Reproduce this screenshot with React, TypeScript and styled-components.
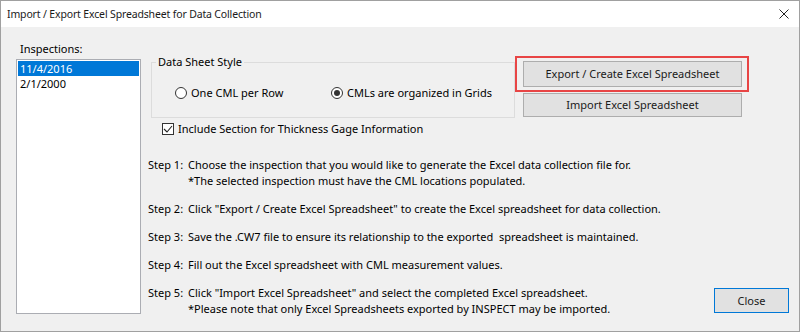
import React from 'react';
import {createGlobalStyle, styled} from 'styled-components';

const GlobalStyle = createGlobalStyle`
  html, body {
    margin: 0;
    padding: 0;
    background: #ffffff;
  }

  body {
    font-family: 'Noto Sans', 'Segoe UI', sans-serif;
    font-size: 11px;
    line-height: 16px;
    color: #000000;
  }
`;

const Window = styled.div`
  display: flex;
  flex-direction: column;
  width: 800px;
  height: 332px;
  box-sizing: border-box;
  border: 1px solid #a0a0a0;
  background: #f0f0f0;
`;

const TitleBar = styled.div`
  display: flex;
  align-items: center;
  justify-content: space-between;
  height: 26px;
  padding: 0 10px 0 6px;
  background: #ffffff;
  color: #1a1a1a;
`;

const Title = styled.span`
  font-size: 10.5px;
  letter-spacing: -0.15px;
`;

const Body = styled.div`
  display: flex;
  flex: 1;
  gap: 7px;
  padding: 14px 10px 0 15px;
`;

const LeftColumn = styled.div`
  display: flex;
  flex-direction: column;
  width: 125px;
`;

const Label = styled.div`
  padding-left: 4px;
  margin-bottom: 2px;
`;

const ListBox = styled.ul`
  margin: 0;
  padding: 1px;
  height: 255px;
  box-sizing: border-box;
  list-style: none;
  background: #ffffff;
  border: 1px solid #abadb3;
`;

const ListItem = styled.li<{$selected?: boolean}>`
  height: 15px;
  line-height: 15px;
  padding-left: 2px;
  color: ${(p) => (p.$selected ? '#ffffff' : '#000000')};
  background: ${(p) => (p.$selected ? '#0078d7' : 'transparent')};
`;

const RightColumn = styled.div`
  display: flex;
  flex: 1;
  flex-direction: column;
  padding-top: 15px;
`;

const TopRow = styled.div`
  display: flex;
  align-items: flex-start;
`;

const GroupBox = styled.fieldset`
  width: 364px;
  height: 62px;
  box-sizing: border-box;
  margin: 0 0 0 3px;
  padding: 17px 0 0 0;
  border: 1px solid #dcdcdc;
  border-radius: 0;
`;

const Legend = styled.legend`
  margin-left: 4px;
  padding: 0 2px;
  line-height: 12px;
`;

const RadioRow = styled.div`
  display: grid;
  grid-template-columns: 156px auto;
  padding-left: 23px;
`;

const Option = styled.label`
  display: flex;
  align-items: center;
  gap: 4px;
`;

const RadioCircle = styled.span<{$checked?: boolean}>`
  position: relative;
  width: 12px;
  height: 12px;
  box-sizing: border-box;
  border: 1px solid #333333;
  border-radius: 50%;
  background: #ffffff;

  &::after {
    content: '';
    display: ${(p) => (p.$checked ? 'block' : 'none')};
    position: absolute;
    inset: 2px;
    border-radius: 50%;
    background: #333333;
  }
`;

const ButtonColumn = styled.div`
  display: flex;
  flex-direction: column;
  gap: 1px;
`;

const Highlight = styled.div`
  padding: 3px 5px 3px 6px;
  border: 2px solid #e84545;
`;

const Button = styled.button<{$width: number; $height: number; $focused?: boolean}>`
  width: ${(p) => p.$width}px;
  height: ${(p) => p.$height}px;
  padding: 0;
  font: inherit;
  color: #1a1a1a;
  background: #e1e1e1;
  border: 1px solid ${(p) => (p.$focused ? '#0078d7' : '#adadad')};
  border-radius: 0;
`;

const ImportButton = styled(Button)`
  margin-left: 8px;
`;

const CheckRow = styled.label`
  display: flex;
  align-items: center;
  gap: 4px;
  margin: 3px 0 0 14px;
`;

const CheckBox = styled.span`
  display: flex;
  align-items: center;
  justify-content: center;
  width: 12px;
  height: 12px;
  box-sizing: border-box;
  border: 1px solid #333333;
  background: #ffffff;
`;

const BottomRow = styled.div`
  display: flex;
  align-items: flex-end;
  justify-content: space-between;
  margin-top: 20px;
`;

const Steps = styled.div`
  display: grid;
  grid-template-columns: 40px auto;
  row-gap: 12px;
`;

const StepText = styled.div`
  white-space: pre;
`;

const CloseButton = styled(Button)`
  margin-bottom: 4px;
`;

const steps: Array<[string, string]> = [
  [
    'Step 1:',
    'Choose the inspection that you would like to generate the Excel data collection file for.\n*The selected inspection must have the CML locations populated.',
  ],
  [
    'Step 2:',
    'Click "Export / Create Excel Spreadsheet" to create the Excel spreadsheet for data collection.',
  ],
  [
    'Step 3:',
    'Save the .CW7 file to ensure its relationship to the exported  spreadsheet is maintained.',
  ],
  ['Step 4:', 'Fill out the Excel spreadsheet with CML measurement values.'],
  [
    'Step 5:',
    'Click "Import Excel Spreadsheet" and select the completed Excel spreadsheet.\n*Please note that only Excel Spreadsheets exported by INSPECT may be imported.',
  ],
];

const App = () => (
  <>
    <GlobalStyle />
    <Window>
      <TitleBar>
        <Title>Import / Export Excel Spreadsheet for Data Collection</Title>
        <svg width="10" height="10" viewBox="0 0 10 10">
          <path d="M0.5 0.5L9.5 9.5M9.5 0.5L0.5 9.5" stroke="#222" strokeWidth="1" />
        </svg>
      </TitleBar>
      <Body>
        <LeftColumn>
          <Label>Inspections:</Label>
          <ListBox>
            <ListItem $selected>11/4/2016</ListItem>
            <ListItem>2/1/2000</ListItem>
          </ListBox>
        </LeftColumn>
        <RightColumn>
          <TopRow>
            <GroupBox>
              <Legend>Data Sheet Style</Legend>
              <RadioRow>
                <Option>
                  <RadioCircle />
                  One CML per Row
                </Option>
                <Option>
                  <RadioCircle $checked />
                  CMLs are organized in Grids
                </Option>
              </RadioRow>
            </GroupBox>
            <ButtonColumn>
              <Highlight>
                <Button $width={219} $height={26}>
                  Export / Create Excel Spreadsheet
                </Button>
              </Highlight>
              <ImportButton $width={219} $height={24}>
                Import Excel Spreadsheet
              </ImportButton>
            </ButtonColumn>
          </TopRow>
          <CheckRow>
            <CheckBox>
              <svg width="10" height="10" viewBox="0 0 10 10">
                <path d="M1 5L4 8L9 2" fill="none" stroke="#222" strokeWidth="1.1" />
              </svg>
            </CheckBox>
            Include Section for Thickness Gage Information
          </CheckRow>
          <BottomRow>
            <Steps>
              {steps.map(([label, text]) => (
                <React.Fragment key={label}>
                  <div>{label}</div>
                  <StepText>{text}</StepText>
                </React.Fragment>
              ))}
            </Steps>
            <CloseButton $width={75} $height={25} $focused>
              Close
            </CloseButton>
          </BottomRow>
        </RightColumn>
      </Body>
    </Window>
  </>
);

export default App;
